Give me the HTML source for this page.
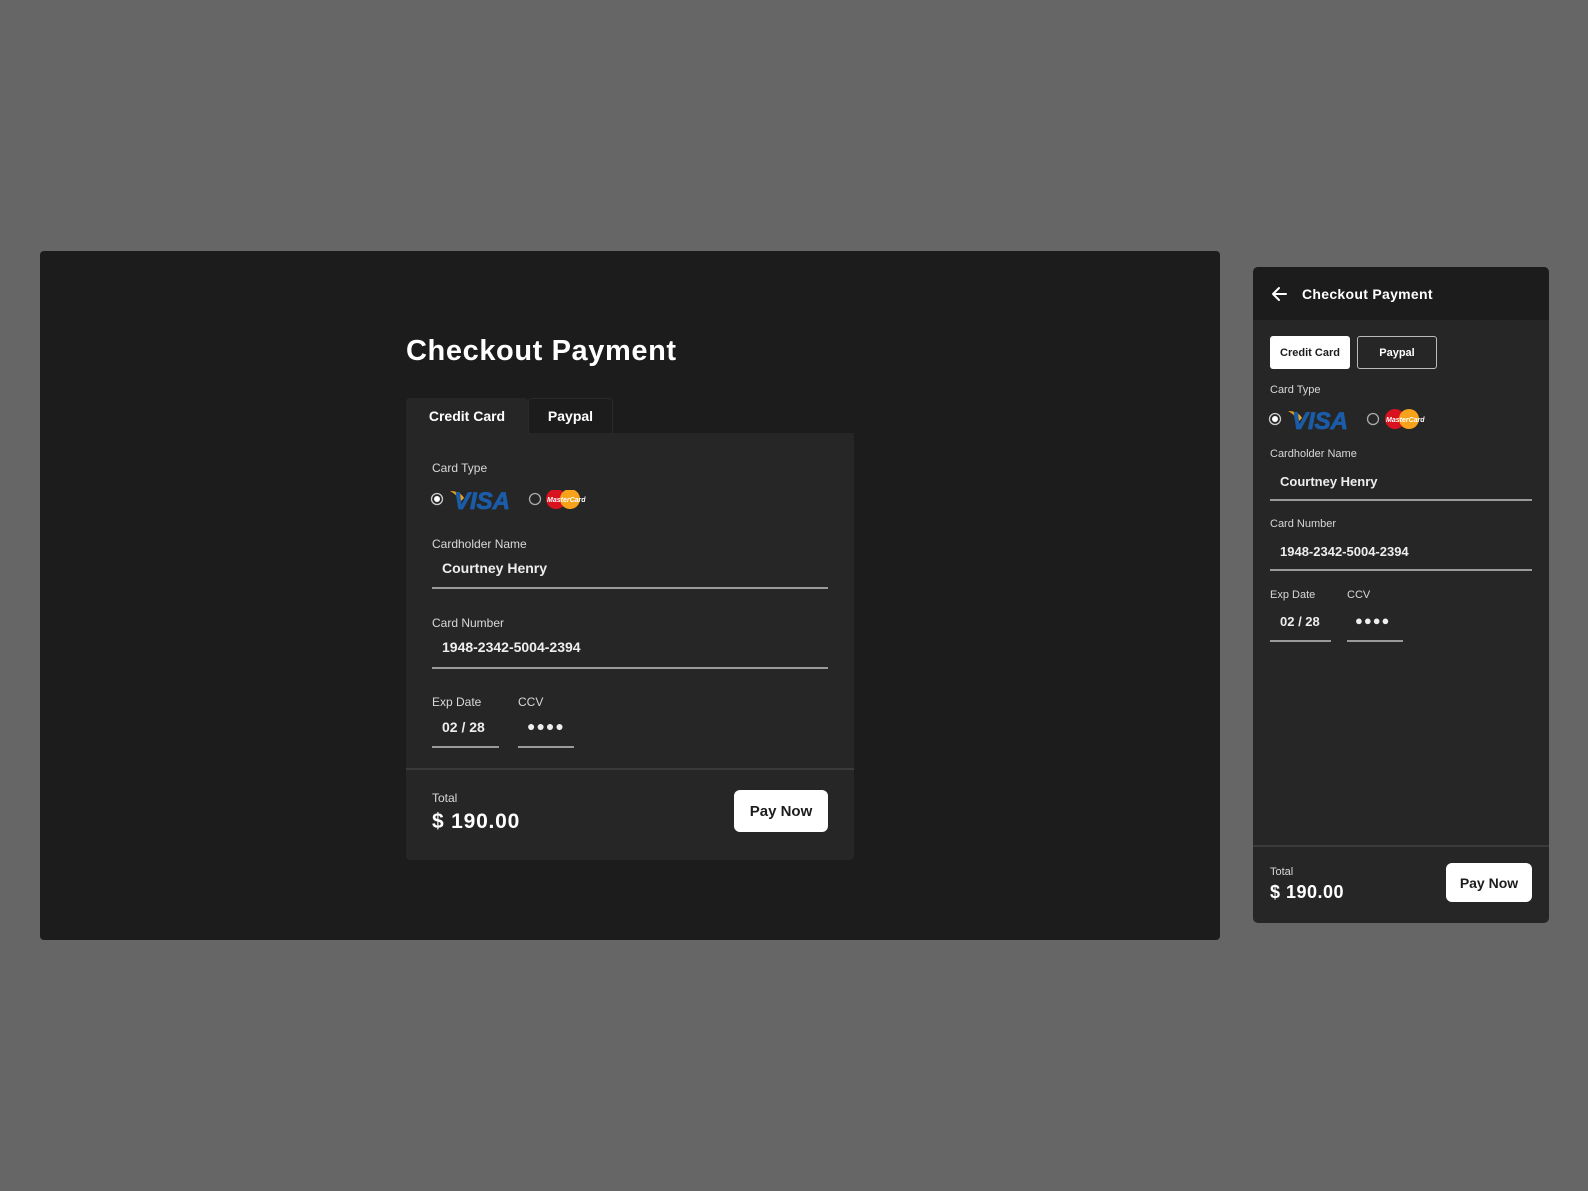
<!DOCTYPE html>
<html><head><meta charset="utf-8"><style>
*{margin:0;padding:0;box-sizing:border-box}
body{width:1588px;height:1191px;background:#666;font-family:"Liberation Sans",sans-serif;position:relative;overflow:hidden;color:#fff}
.a{position:absolute}
.lbl{position:absolute;font-size:12px;color:#d8d8d8;line-height:14px}
.val{position:absolute;font-size:14px;font-weight:bold;color:#eee;line-height:16px}
.line{position:absolute;height:2px;background:#9a9a9a}
.btn{position:absolute;background:#fff;color:#1c1c1c;font-weight:bold;border-radius:6px;display:flex;align-items:center;justify-content:center}
</style></head><body>
<div class="a" style="left:40px;top:251px;width:1180px;height:689px;background:#1c1c1c;border-radius:4px"></div>
<div class="a" style="left:406px;top:335px;font-size:29px;font-weight:bold;line-height:32px;letter-spacing:0.6px">Checkout Payment</div>
<div class="a" style="left:406px;top:398px;width:122px;height:36px;background:#262626;border-radius:4px 4px 0 0;font-size:14px;font-weight:bold;display:flex;align-items:center;justify-content:center">Credit Card</div>
<div class="a" style="left:528px;top:398px;width:85px;height:35px;background:#1c1c1c;border:1px solid #2a2a2a;border-bottom:none;border-radius:4px 4px 0 0;font-size:14px;font-weight:bold;display:flex;align-items:center;justify-content:center">Paypal</div>
<div class="a" style="left:406px;top:433px;width:448px;height:427px;background:#262626;border-radius:0 0 4px 4px"></div>
<div class="lbl" style="left:432px;top:461px">Card Type</div>
<svg class="a" style="left:430px;top:490px" width="160" height="22">
<circle cx="7" cy="9" r="5.5" fill="none" stroke="#ccc" stroke-width="1.3"/><circle cx="7" cy="9" r="3" fill="#fff"/>
<path d="M20 1 Q30 1 34 8 L30 12 Q28 5 20 1Z" fill="#f4a51c"/>
<text x="24" y="19" font-family="Liberation Sans" font-weight="bold" font-style="italic" font-size="24" fill="#1a5ca8" stroke="#1a5ca8" stroke-width="0.8" textLength="56" lengthAdjust="spacingAndGlyphs">VISA</text>
<circle cx="105" cy="9" r="5.5" fill="none" stroke="#aaa" stroke-width="1.3"/>
<circle cx="126" cy="9" r="10" fill="#d9121f"/><circle cx="140" cy="9" r="10" fill="#f7a21b"/>
<text x="117" y="12" font-family="Liberation Sans" font-weight="bold" font-style="italic" font-size="7" fill="#fff">MasterCard</text>
</svg>
<div class="lbl" style="left:432px;top:537px">Cardholder Name</div>
<div class="val" style="left:442px;top:560px">Courtney Henry</div>
<div class="line" style="left:432px;top:587px;width:396px"></div>
<div class="lbl" style="left:432px;top:616px">Card Number</div>
<div class="val" style="left:442px;top:639px">1948-2342-5004-2394</div>
<div class="line" style="left:432px;top:667px;width:396px"></div>
<div class="lbl" style="left:432px;top:695px">Exp Date</div>
<div class="lbl" style="left:518px;top:695px">CCV</div>
<div class="val" style="left:442px;top:719px">02 / 28</div>
<div class="val" style="left:527px;top:718px;letter-spacing:1px">●●●●</div>
<div class="line" style="left:432px;top:746px;width:67px"></div>
<div class="line" style="left:518px;top:746px;width:56px"></div>
<div class="a" style="left:406px;top:768px;width:448px;height:2px;background:#3a3a3a"></div>
<div class="lbl" style="left:432px;top:791px">Total</div>
<div class="a" style="left:432px;top:810px;font-size:21px;font-weight:bold;line-height:24px;letter-spacing:0.8px">$ 190.00</div>
<div class="btn" style="left:734px;top:790px;width:94px;height:42px;font-size:15px">Pay Now</div>

<div class="a" style="left:1253px;top:267px;width:296px;height:656px;background:#262626;border-radius:5px;overflow:hidden">
<div class="a" style="left:0;top:0;width:296px;height:53px;background:#1c1c1c"></div>
<div class="a" style="left:0;top:578px;width:296px;height:2px;background:#3a3a3a"></div>
</div>
<svg class="a" style="left:1270px;top:285px" width="18" height="18"><path d="M16 9H3M9 3L3 9l6 6" fill="none" stroke="#fff" stroke-width="2" stroke-linecap="round" stroke-linejoin="round"/></svg>
<div class="a" style="left:1302px;top:286px;font-size:14px;font-weight:bold;line-height:16px;letter-spacing:0.3px">Checkout Payment</div>
<div class="btn" style="left:1270px;top:336px;width:80px;height:33px;font-size:11px;border-radius:3px">Credit Card</div>
<div class="a" style="left:1357px;top:336px;width:80px;height:33px;border:1.5px solid #bbb;border-radius:3px;font-size:11px;font-weight:bold;display:flex;align-items:center;justify-content:center">Paypal</div>
<div class="lbl" style="left:1270px;top:383px;font-size:11px">Card Type</div>
<svg class="a" style="left:1268px;top:409px" width="160" height="22">
<circle cx="7" cy="10" r="5.5" fill="none" stroke="#ccc" stroke-width="1.3"/><circle cx="7" cy="10" r="3" fill="#fff"/>
<path d="M20 2 Q30 2 34 9 L30 13 Q28 6 20 2Z" fill="#f4a51c"/>
<text x="24" y="20" font-family="Liberation Sans" font-weight="bold" font-style="italic" font-size="24" fill="#1a5ca8" stroke="#1a5ca8" stroke-width="0.8" textLength="56" lengthAdjust="spacingAndGlyphs">VISA</text>
<circle cx="105" cy="10" r="5.5" fill="none" stroke="#aaa" stroke-width="1.3"/>
<circle cx="127" cy="10" r="10" fill="#d9121f"/><circle cx="141" cy="10" r="10" fill="#f7a21b"/>
<text x="118" y="13" font-family="Liberation Sans" font-weight="bold" font-style="italic" font-size="7" fill="#fff">MasterCard</text>
</svg>
<div class="lbl" style="left:1270px;top:447px;font-size:11px">Cardholder Name</div>
<div class="val" style="left:1280px;top:474px;font-size:13px">Courtney Henry</div>
<div class="line" style="left:1270px;top:499px;width:262px"></div>
<div class="lbl" style="left:1270px;top:517px;font-size:11px">Card Number</div>
<div class="val" style="left:1280px;top:544px;font-size:13px">1948-2342-5004-2394</div>
<div class="line" style="left:1270px;top:569px;width:262px"></div>
<div class="lbl" style="left:1270px;top:588px;font-size:11px">Exp Date</div>
<div class="lbl" style="left:1347px;top:588px;font-size:11px">CCV</div>
<div class="val" style="left:1280px;top:614px;font-size:13px">02 / 28</div>
<div class="val" style="left:1355px;top:613px;font-size:13px;letter-spacing:1px">●●●●</div>
<div class="line" style="left:1270px;top:640px;width:61px"></div>
<div class="line" style="left:1347px;top:640px;width:56px"></div>
<div class="lbl" style="left:1270px;top:865px;font-size:11px">Total</div>
<div class="a" style="left:1270px;top:882px;font-size:18px;font-weight:bold;line-height:20px;letter-spacing:0.5px">$ 190.00</div>
<div class="btn" style="left:1446px;top:863px;width:86px;height:39px;font-size:14px">Pay Now</div>
</body></html>
